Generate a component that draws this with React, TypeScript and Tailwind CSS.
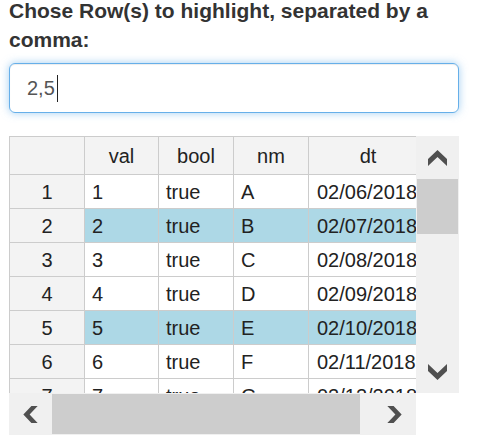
import React from 'react';

const rows = [
  { id: 1, val: '1', bool: 'true', nm: 'A', dt: '02/06/2018' },
  { id: 2, val: '2', bool: 'true', nm: 'B', dt: '02/07/2018' },
  { id: 3, val: '3', bool: 'true', nm: 'C', dt: '02/08/2018' },
  { id: 4, val: '4', bool: 'true', nm: 'D', dt: '02/09/2018' },
  { id: 5, val: '5', bool: 'true', nm: 'E', dt: '02/10/2018' },
  { id: 6, val: '6', bool: 'true', nm: 'F', dt: '02/11/2018' },
  { id: 7, val: '7', bool: 'true', nm: 'G', dt: '02/12/2018' },
];

const highlighted = [2, 5];

function Arrow({ dir }: { dir: 'up' | 'down' | 'left' | 'right' }) {
  if (dir === 'up')
    return (
      <svg width="19" height="16" viewBox="0 0 19 16">
        <polygon points="0,9 9.5,0 19,9 19,16 9.5,7 0,16" fill="#505050" />
      </svg>
    );
  if (dir === 'down')
    return (
      <svg width="19" height="16" viewBox="0 0 19 16">
        <polygon points="0,0 9.5,9 19,0 19,7 9.5,16 0,7" fill="#505050" />
      </svg>
    );
  if (dir === 'left')
    return (
      <svg width="15" height="17" viewBox="0 0 16 19">
        <polygon points="9,0 0,9.5 9,19 16,19 7,9.5 16,0" fill="#505050" />
      </svg>
    );
  return (
    <svg width="15" height="17" viewBox="0 0 16 19">
      <polygon points="0,0 9,9.5 0,19 7,19 16,9.5 7,0" fill="#505050" />
    </svg>
  );
}

export default function App() {
  return (
    <div className="min-h-screen bg-white font-['Liberation_Sans',Arial,sans-serif]">
      <div className="ml-[9px] w-[450px]">
        <label className="block -mt-[3px] mb-[9px] text-[21px] leading-[28.5px] font-bold text-[#333]">
          Chose Row(s) to highlight, separated by a comma:
        </label>

        <div className="flex items-center h-[50px] px-[17px] border border-[#66afe9] rounded-[6px] shadow-[inset_0_1px_1px_rgba(0,0,0,0.075),0_0_8px_rgba(102,175,233,0.6)] text-[20px] text-[#555]">
          <span>2,5</span>
          <span className="ml-[2px] w-px h-[27px] bg-[#222]" />
        </div>

        {/* handsontable */}
        <div className="mt-[23px] flex flex-col">
          <div className="flex">
            <div className="w-[407px] h-[257px] overflow-hidden text-[20px] text-[#222]">
              <div className="flex h-[39px] border-t border-[#ccc] bg-[#f3f3f3]">
                <div className="w-[76px] shrink-0 border-l border-r border-b border-[#ccc]" />
                <div className="w-[74px] shrink-0 flex items-center justify-center border-r border-b border-[#ccc]">val</div>
                <div className="w-[75px] shrink-0 flex items-center justify-center border-r border-b border-[#ccc]">bool</div>
                <div className="w-[75px] shrink-0 flex items-center justify-center border-r border-b border-[#ccc]">nm</div>
                <div className="w-[119px] shrink-0 flex items-center justify-center border-r border-b border-[#ccc]">dt</div>
              </div>
              {rows.map((r) => {
                const hl = highlighted.includes(r.id);
                const bg = hl ? 'bg-[#add8e6]' : 'bg-white';
                return (
                  <div key={r.id} className="flex h-[34px]">
                    <div className="w-[76px] shrink-0 flex items-center justify-center bg-[#f3f3f3] border-l border-r border-b border-[#ccc]">
                      {r.id}
                    </div>
                    <div className={`w-[74px] shrink-0 flex items-center pl-[7px] border-r border-b border-[#ccc] ${bg}`}>{r.val}</div>
                    <div className={`w-[75px] shrink-0 flex items-center pl-[7px] border-r border-b border-[#ccc] ${bg}`}>{r.bool}</div>
                    <div className={`w-[75px] shrink-0 flex items-center pl-[7px] border-r border-b border-[#ccc] ${bg}`}>{r.nm}</div>
                    <div className={`w-[119px] shrink-0 flex items-center pl-[8px] whitespace-nowrap border-r border-b border-[#ccc] ${bg}`}>{r.dt}</div>
                  </div>
                );
              })}
            </div>

            {/* vertical scrollbar */}
            <div className="w-[43px] h-[257px] flex flex-col bg-[#f0f0f0]">
              <div className="h-[43px] flex items-center justify-center">
                <Arrow dir="up" />
              </div>
              <div className="h-[55px] mx-px bg-[#cdcdcd]" />
              <div className="flex-1" />
              <div className="h-[43px] flex items-center justify-center">
                <Arrow dir="down" />
              </div>
            </div>
          </div>

          {/* horizontal scrollbar */}
          <div className="flex">
            <div className="w-[407px] h-[42px] flex bg-[#f0f0f0]">
              <div className="w-[43px] flex items-center justify-center">
                <Arrow dir="left" />
              </div>
              <div className="w-[308px] my-px bg-[#cdcdcd]" />
              <div className="flex-1" />
              <div className="w-[43px] flex items-center justify-center">
                <Arrow dir="right" />
              </div>
            </div>
            <div className="w-[43px] h-[42px] bg-white" />
          </div>
        </div>
      </div>
    </div>
  );
}
